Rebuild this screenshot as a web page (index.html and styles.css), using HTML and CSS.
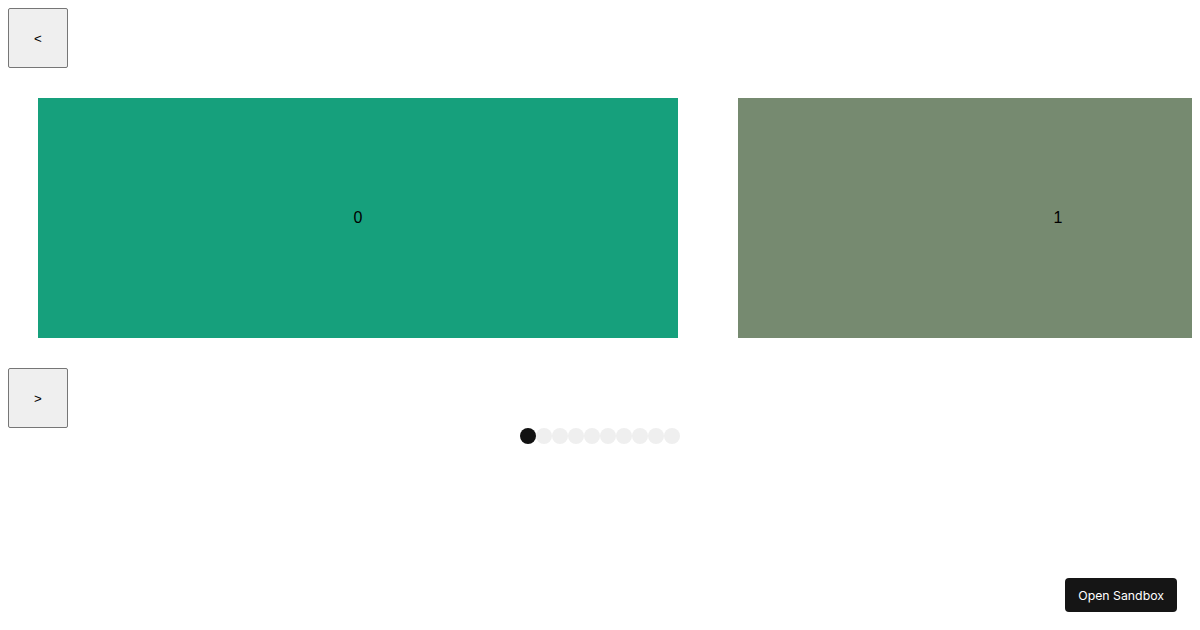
FILE: index.html
```html
<!DOCTYPE html>
<html>
<head>
<meta charset="utf-8">
<link rel="stylesheet" href="styles.css">
</head>
<body>
<button class="nav">&lt;</button>
<div class="viewport">
  <div class="track">
    <div class="slide s0">0</div>
    <div class="slide s1">1</div>
  </div>
</div>
<button class="nav">&gt;</button>
<div class="dots">
  <span class="dot active"></span><span class="dot"></span><span class="dot"></span><span class="dot"></span><span class="dot"></span><span class="dot"></span><span class="dot"></span><span class="dot"></span><span class="dot"></span><span class="dot"></span>
</div>
<a class="sandbox">Open Sandbox</a>
</body>
</html>
```
FILE: styles.css
```css
html, body { height: 100%; }
body {
  margin: 8px;
  font-family: "Liberation Sans", Arial, sans-serif;
  font-size: 16px;
  color: #000;
  background: #fff;
}
.nav {
  display: block;
  width: 60px;
  height: 60px;
  margin: 0;
  padding: 0;
  background: #efefef;
  border: 1px solid #767676;
  border-radius: 2px;
  font-family: "Liberation Sans", Arial, sans-serif;
  font-size: 13.33px;
  color: #000;
}
.viewport {
  overflow: hidden;
  width: 100%;
}
.track {
  display: flex;
}
.slide {
  flex: 0 0 640px;
  height: 240px;
  margin: 30px;
  display: flex;
  align-items: center;
  justify-content: center;
}
.s0 { background: #16a07c; }
.s1 { background: #768a70; }
.dots {
  display: flex;
  justify-content: center;
}
.dot {
  width: 16px;
  height: 16px;
  border-radius: 50%;
  background: #efefef;
}
.dot.active { background: #111; }
.sandbox {
  position: fixed;
  right: 23px;
  bottom: 18px;
  height: 34px;
  padding: 0 13px;
  display: flex;
  align-items: center;
  background: #151515;
  color: #fff;
  border-radius: 4px;
  font-family: Inter, "Liberation Sans", sans-serif;
  font-size: 12.3px;
}
```
